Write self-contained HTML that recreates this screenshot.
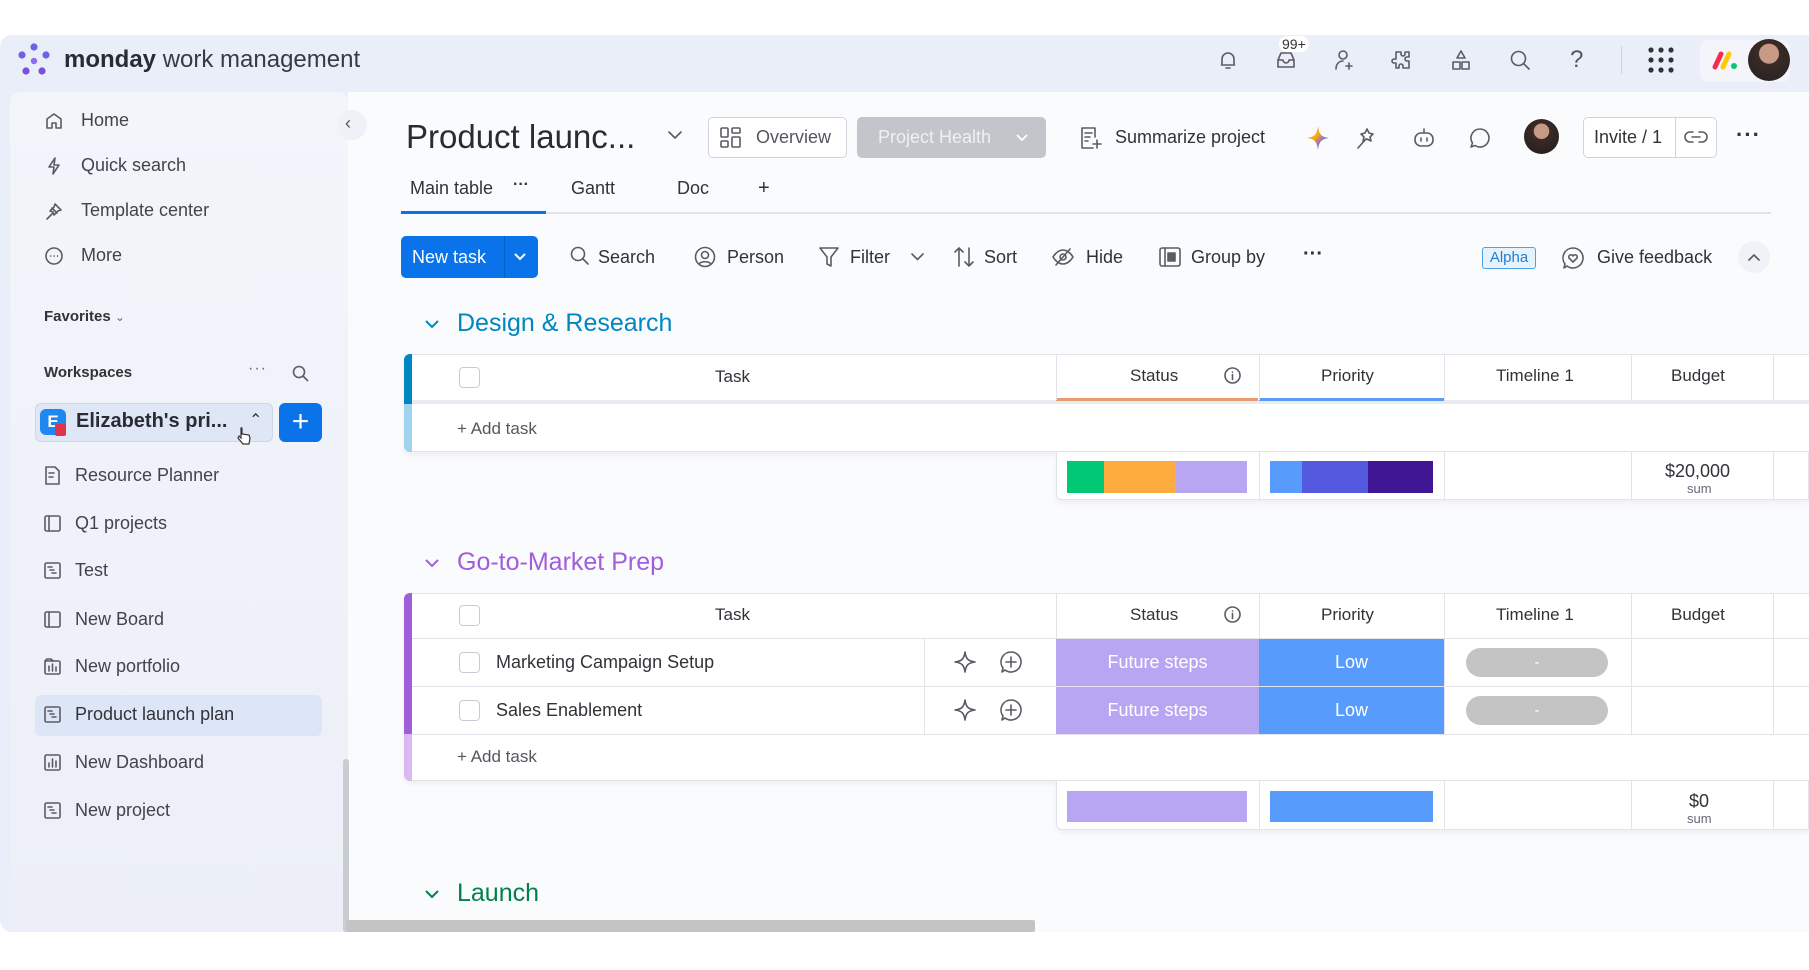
<!DOCTYPE html>
<html><head><meta charset="utf-8">
<style>
*{box-sizing:border-box;margin:0;padding:0}
body{width:1809px;height:970px;background:#fff;font-family:"Liberation Sans",sans-serif;color:#323338;position:relative;overflow:hidden}
.a{position:absolute}
.app{left:0;top:35px;width:1809px;height:897px;background:#e9eef9;border-radius:12px 0 0 12px;overflow:hidden}
.side{left:10px;top:92px;width:338px;height:840px;background:linear-gradient(#f3f5fb,#eceff7);border-radius:10px 10px 0 0}
.main{left:348px;top:92px;width:1461px;height:840px;background:#fafbfd}
.t{position:absolute;white-space:nowrap}
.si{font-size:18px;color:#42444b}
.ic{position:absolute}
svg{position:absolute;overflow:visible}
.gi{fill:none;stroke:#5a5c63;stroke-width:1.6;stroke-linecap:round;stroke-linejoin:round}
.tb{font-size:18px;color:#323338}
.hdr{font-size:17px;color:#323338}
.cell{position:absolute;border-left:1px solid #e2e4ea}
</style></head><body>
<div class="a app"></div>
<!-- top bar logo -->
<svg style="left:16px;top:42px" width="36" height="36" viewBox="0 0 36 36">
<g fill="#6c63e8"><circle cx="18" cy="5" r="3.6"/><circle cx="6" cy="13" r="3.6"/><circle cx="30" cy="13" r="3.6"/><circle cx="18" cy="19" r="3.2" fill="#8a6df0"/><circle cx="10" cy="29" r="3.6" fill="#7b4ee0"/><circle cx="26" cy="29" r="3.6" fill="#7b4ee0"/></g></svg>
<div class="t" style="left:64px;top:46px;font-size:24px;"><b style="color:#2b2c33">monday</b> <span style="color:#3a3b40">work management</span></div>
<!-- top icons -->
<svg style="left:1216px;top:48px" width="24" height="24" viewBox="0 0 24 24" class="gi"><path d="M6 17V11a6 6 0 0 1 12 0v6H5.5h13M10 20h4"/></svg>
<svg style="left:1274px;top:48px" width="24" height="24" viewBox="0 0 24 24" class="gi"><path d="M4 12v7h16v-7M4 12l3-7h10l3 7h-5a3 3 0 0 1-6 0z"/></svg>
<div class="t" style="left:1279px;top:36px;font-size:14px;background:#fff;border-radius:9px;padding:0 3px;color:#323338">99+</div>
<svg style="left:1332px;top:48px" width="24" height="24" viewBox="0 0 24 24" class="gi"><circle cx="11" cy="7" r="4"/><path d="M4 21c0-5 3-8 7-8M17 15v6M14 18h6"/></svg>
<svg style="left:1390px;top:48px" width="24" height="24" viewBox="0 0 24 24" class="gi"><path d="M6 4h5v2a2 2 0 0 0 4 0V4h4v5h-2a2 2 0 0 0 0 4h2v7h-6v-2a2 2 0 0 0-4 0v2H6v-5H4a2 2 0 0 1 0-4h2z"/></svg>
<svg style="left:1449px;top:48px" width="24" height="24" viewBox="0 0 24 24" class="gi"><path d="M12 3l4 7H8zM4 14h7v7H4zM13 14h7v7h-7z"/></svg>
<svg style="left:1508px;top:48px" width="24" height="24" viewBox="0 0 24 24" class="gi"><circle cx="10.5" cy="10.5" r="7"/><path d="M16 16l5 5"/></svg>
<div class="t" style="left:1570px;top:46px;font-size:24px;color:#55575e">?</div>
<div class="a" style="left:1621px;top:46px;width:1px;height:28px;background:#d0d4de"></div>
<svg style="left:1648px;top:47px" width="26" height="26" viewBox="0 0 26 26"><g fill="#323338"><circle cx="3" cy="3" r="2.6"/><circle cx="13" cy="3" r="2.6"/><circle cx="23" cy="3" r="2.6"/><circle cx="3" cy="13" r="2.6"/><circle cx="13" cy="13" r="2.6"/><circle cx="23" cy="13" r="2.6"/><circle cx="3" cy="23" r="2.6"/><circle cx="13" cy="23" r="2.6"/><circle cx="23" cy="23" r="2.6"/></g></svg>
<div class="a" style="left:1700px;top:40px;width:90px;height:42px;background:#f3f5fa;border-radius:8px"></div>
<svg style="left:1712px;top:50px" width="26" height="20" viewBox="0 0 26 20"><path d="M3 17L9 4" stroke="#f62b54" stroke-width="5" stroke-linecap="round"/><path d="M11 17L17 4" stroke="#ffcb00" stroke-width="5" stroke-linecap="round"/><circle cx="22" cy="16" r="3" fill="#00ca72"/></svg>
<div class="a" style="left:1748px;top:39px;width:42px;height:42px;border-radius:50%;background:radial-gradient(circle at 50% 35%,#c79a86 0 28%,#3a2a25 30%,#222 100%)"></div>

<div class="a side"></div>
<div class="a main"></div>
<!-- sidebar -->
<svg style="left:45px;top:112px" width="18" height="18" viewBox="0 0 18 18" class="gi"><path d="M2 16V7l7-5 7 5v9h-5v-5H7v5z"/></svg>
<div class="t si" style="left:81px;top:110px">Home</div>
<svg style="left:45px;top:157px" width="18" height="18" viewBox="0 0 18 18" class="gi"><path d="M10 1L4 10h5l-1 7 6-9H9z"/></svg>
<div class="t si" style="left:81px;top:155px">Quick search</div>
<svg style="left:45px;top:202px" width="18" height="18" viewBox="0 0 18 18" class="gi"><path d="M2 17l6-6M7 6l5 5M10 2l6 6-3 1-4 4-1-3-3-1 4-4z"/></svg>
<div class="t si" style="left:81px;top:200px">Template center</div>
<svg style="left:45px;top:247px" width="18" height="18" viewBox="0 0 18 18" class="gi"><circle cx="9" cy="9" r="8"/><path d="M5.5 9h.1M9 9h.1M12.5 9h.1"/></svg>
<div class="t si" style="left:81px;top:245px">More</div>
<div class="t" style="left:44px;top:308px;font-size:15px;font-weight:bold;color:#323338">Favorites <span style="font-weight:normal;font-size:12px;color:#676879">&#8964;</span></div>
<div class="t" style="left:44px;top:364px;font-size:15px;font-weight:bold;color:#323338">Workspaces</div>
<div class="t" style="left:248px;top:360px;font-size:16px;color:#676879;letter-spacing:1px">···</div>
<svg style="left:292px;top:365px" width="17" height="17" viewBox="0 0 17 17" class="gi"><circle cx="7" cy="7" r="5.5"/><path d="M11 11l4.5 4.5"/></svg>
<div class="a" style="left:35px;top:403px;width:238px;height:39px;background:#dfe7f6;border:1px solid #cfd6e4;border-radius:6px"></div>
<div class="a" style="left:40px;top:409px;width:26px;height:26px;background:#1e88f0;border-radius:6px;color:#fff;font-size:17px;font-weight:bold;text-align:center;line-height:26px">E</div>
<div class="a" style="left:55px;top:424px;width:11px;height:12px;background:#e2334e;border-radius:2px"></div>
<div class="t" style="left:76px;top:410px;font-size:20px;font-weight:bold;color:#2b2c33">Elizabeth's pri...</div>
<div class="t" style="left:249px;top:410px;font-size:16px;color:#323338">&#8963;</div>
<div class="a" style="left:279px;top:403px;width:43px;height:39px;background:#0a73ea;border-radius:6px;color:#fff;font-size:30px;text-align:center;line-height:37px">+</div>
<svg style="left:236px;top:426px" width="16" height="20" viewBox="0 0 16 20"><path d="M5 2v10l-2-2-1 2 5 6h6l1-6-1-3-7-1V2z" fill="#fff" stroke="#333" stroke-width="1.2"/></svg>
<div class="a" style="left:35px;top:695px;width:287px;height:41px;background:#dce6f7;border-radius:6px"></div>
<!-- board list -->
<svg style="left:44px;top:466px" width="17" height="19" viewBox="0 0 17 19" class="gi"><path d="M2 1h9l4 4v13H2zM5 7h5M5 11h4"/></svg>
<div class="t si" style="left:75px;top:465px">Resource Planner</div>
<svg style="left:44px;top:515px" width="17" height="17" viewBox="0 0 17 17" class="gi"><rect x="1" y="1" width="15" height="15" rx="1.5"/><path d="M5 1v15"/></svg>
<div class="t si" style="left:75px;top:513px">Q1 projects</div>
<svg style="left:44px;top:562px" width="17" height="17" viewBox="0 0 17 17" class="gi"><rect x="1" y="1" width="15" height="15" rx="1.5"/><path d="M4 5h4M6 8h4M8 11h4"/></svg>
<div class="t si" style="left:75px;top:560px">Test</div>
<svg style="left:44px;top:611px" width="17" height="17" viewBox="0 0 17 17" class="gi"><rect x="1" y="1" width="15" height="15" rx="1.5"/><path d="M5 1v15"/></svg>
<div class="t si" style="left:75px;top:609px">New Board</div>
<svg style="left:44px;top:658px" width="17" height="17" viewBox="0 0 17 17" class="gi"><rect x="1" y="3" width="15" height="13" rx="1.5"/><path d="M1 3l2-2h4l2 2M5 13V8M8.5 13V6M12 13V9"/></svg>
<div class="t si" style="left:75px;top:656px">New portfolio</div>
<svg style="left:44px;top:706px" width="17" height="17" viewBox="0 0 17 17" class="gi"><rect x="1" y="1" width="15" height="15" rx="1.5"/><path d="M4 5h4M6 8h4M8 11h4"/></svg>
<div class="t si" style="left:75px;top:704px;color:#323338">Product launch plan</div>
<svg style="left:44px;top:754px" width="17" height="17" viewBox="0 0 17 17" class="gi"><rect x="1" y="1" width="15" height="15" rx="1.5"/><path d="M5 13V9M8.5 13V5M12 13V7"/></svg>
<div class="t si" style="left:75px;top:752px">New Dashboard</div>
<svg style="left:44px;top:802px" width="17" height="17" viewBox="0 0 17 17" class="gi"><rect x="1" y="1" width="15" height="15" rx="1.5"/><path d="M4 5h4M6 8h4M8 11h4"/></svg>
<div class="t si" style="left:75px;top:800px">New project</div>
<div class="a" style="left:343px;top:759px;width:6px;height:173px;background:#c9ccd3;border-radius:3px"></div>
<div class="a" style="left:337px;top:110px;width:30px;height:30px;border-radius:50%;background:#eef1f8"></div>
<div class="t" style="left:345px;top:113px;font-size:18px;color:#555">&#8249;</div>

<!-- header -->
<div class="t" style="left:406px;top:118px;font-size:33px;color:#2b2c33">Product launc...</div>
<svg style="left:667px;top:130px" width="16" height="10" viewBox="0 0 16 10" class="gi"><path d="M2 2l6 6 6-6"/></svg>
<div class="a" style="left:708px;top:117px;width:139px;height:41px;border:1px solid #d0d4dc;border-radius:5px;background:#fff"></div>
<svg style="left:720px;top:127px" width="22" height="22" viewBox="0 0 22 22" class="gi"><rect x="1" y="1" width="7" height="9" rx="1"/><rect x="12" y="1" width="8" height="5" rx="1"/><rect x="1" y="14" width="7" height="6" rx="1"/><rect x="12" y="10" width="8" height="10" rx="1"/></svg>
<div class="t" style="left:756px;top:127px;font-size:18px;color:#55575e">Overview</div>
<div class="a" style="left:857px;top:117px;width:189px;height:41px;background:#c3c5ca;border-radius:5px"></div>
<div class="t" style="left:878px;top:127px;font-size:18px;color:#eef0f3">Project Health</div>
<svg style="left:1015px;top:133px" width="14" height="9" viewBox="0 0 14 9"><path d="M2 2l5 5 5-5" fill="none" stroke="#fff" stroke-width="1.8"/></svg>
<svg style="left:1080px;top:126px" width="22" height="24" viewBox="0 0 22 24" class="gi"><path d="M13 22H2V2h13v9M5 7h7M5 11h5M5 15h3M17 14v8M13 18h8"/></svg>
<div class="t" style="left:1115px;top:127px;font-size:18px;color:#323338">Summarize project</div>
<svg style="left:1306px;top:125px" width="24" height="26" viewBox="0 0 24 26"><defs><linearGradient id="g" x1="0" y1="0" x2="1" y2="1"><stop offset="0" stop-color="#ff4d6d"/><stop offset=".4" stop-color="#ffb000"/><stop offset=".7" stop-color="#7b5cff"/><stop offset="1" stop-color="#0aa5ff"/></linearGradient></defs><path d="M12 1C13 9 15 12 23 13 15 14 13 17 12 25 11 17 9 14 1 13 9 12 11 9 12 1z" fill="url(#g)"/></svg>
<svg style="left:1356px;top:126px" width="22" height="24" viewBox="0 0 22 24" class="gi"><path d="M2 22l8-9M11 3l2 4 4 1-3 3 1 4-4-2-4 2 1-4-3-3 4-1z"/></svg>
<svg style="left:1412px;top:127px" width="24" height="22" viewBox="0 0 24 22" class="gi"><rect x="3" y="6" width="18" height="13" rx="6"/><path d="M12 2v4M9 11v3M15 11v3"/></svg>
<svg style="left:1469px;top:127px" width="22" height="22" viewBox="0 0 22 22" class="gi"><path d="M11 2a9 9 0 1 1-5 16.5L2 20l1.5-4A9 9 0 0 1 11 2z"/></svg>
<div class="a" style="left:1524px;top:119px;width:35px;height:35px;border-radius:50%;background:radial-gradient(circle at 50% 35%,#c79a86 0 26%,#3a2a25 28%,#1e1e1e 100%)"></div>
<div class="a" style="left:1583px;top:117px;width:134px;height:41px;border:1px solid #d0d4dc;border-radius:5px;background:#fff"></div>
<div class="a" style="left:1675px;top:117px;width:1px;height:41px;background:#d0d4dc"></div>
<div class="t" style="left:1594px;top:127px;font-size:18px;color:#323338">Invite / 1</div>
<svg style="left:1685px;top:129px" width="22" height="16" viewBox="0 0 22 16" class="gi"><path d="M8 3H5a5 5 0 0 0 0 10h3M14 3h3a5 5 0 0 1 0 10h-3M7 8h8"/></svg>
<div class="t" style="left:1736px;top:122px;font-size:22px;font-weight:bold;color:#323338;letter-spacing:1px">···</div>
<!-- tabs -->
<div class="a" style="left:401px;top:212px;width:1370px;height:2px;background:#e1e3ea"></div>
<div class="a" style="left:401px;top:211px;width:145px;height:3px;background:#0a73ea"></div>
<div class="t" style="left:410px;top:178px;font-size:18px;color:#323338">Main table</div>
<div class="t" style="left:513px;top:176px;font-size:16px;color:#323338;font-weight:bold">···</div>
<div class="t" style="left:571px;top:178px;font-size:18px;color:#323338">Gantt</div>
<div class="t" style="left:677px;top:178px;font-size:18px;color:#323338">Doc</div>
<div class="t" style="left:758px;top:177px;font-size:20px;color:#323338">+</div>
<!-- toolbar -->
<div class="a" style="left:401px;top:236px;width:137px;height:42px;background:#0a73ea;border-radius:5px"></div>
<div class="a" style="left:504px;top:236px;width:1px;height:42px;background:#0060c9"></div>
<div class="t" style="left:412px;top:247px;font-size:18px;color:#fff">New task</div>
<svg style="left:513px;top:252px" width="14" height="9" viewBox="0 0 14 9"><path d="M2 2l5 5 5-5" fill="none" stroke="#fff" stroke-width="2"/></svg>
<svg style="left:570px;top:246px" width="20" height="20" viewBox="0 0 20 20" class="gi"><circle cx="8" cy="8" r="6.5"/><path d="M13 13l5 5"/></svg>
<div class="t tb" style="left:598px;top:247px">Search</div>
<svg style="left:694px;top:246px" width="22" height="22" viewBox="0 0 22 22" class="gi"><circle cx="11" cy="11" r="9.5"/><circle cx="11" cy="9" r="3.5"/><path d="M5 18c2-3 10-3 12 0"/></svg>
<div class="t tb" style="left:727px;top:247px">Person</div>
<svg style="left:818px;top:246px" width="22" height="22" viewBox="0 0 22 22" class="gi"><path d="M2 2h18l-7 9v9l-4-2v-7z"/></svg>
<div class="t tb" style="left:850px;top:247px">Filter</div>
<svg style="left:911px;top:253px" width="13" height="8" viewBox="0 0 13 8" class="gi"><path d="M1 1l5.5 5.5L12 1"/></svg>
<svg style="left:953px;top:246px" width="22" height="22" viewBox="0 0 22 22" class="gi"><path d="M6 20V2M2 6l4-4 4 4M16 2v18M12 16l4 4 4-4"/></svg>
<div class="t tb" style="left:984px;top:247px">Sort</div>
<svg style="left:1052px;top:248px" width="22" height="18" viewBox="0 0 22 18" class="gi"><path d="M1 9s4-7 10-7 10 7 10 7-4 7-10 7S1 9 1 9z"/><circle cx="11" cy="9" r="3"/><path d="M4 17L18 1"/></svg>
<div class="t tb" style="left:1086px;top:247px">Hide</div>
<svg style="left:1159px;top:246px" width="22" height="22" viewBox="0 0 22 22" class="gi"><rect x="1" y="2" width="20" height="18" rx="2"/><path d="M6 2v18"/><rect x="9" y="7" width="7" height="8" fill="#5a5c63"/></svg>
<div class="t tb" style="left:1191px;top:247px">Group by</div>
<div class="t" style="left:1303px;top:243px;font-size:20px;color:#323338;font-weight:bold">···</div>
<div class="a" style="left:1482px;top:247px;width:54px;height:22px;border:1.5px solid #4aa3e8;border-radius:3px;background:#e6f2fc;color:#1f7fd1;font-size:15px;text-align:center;line-height:19px">Alpha</div>
<svg style="left:1561px;top:246px" width="24" height="24" viewBox="0 0 24 24" class="gi"><path d="M12 2a10 10 0 1 1-6 18l-3 2 1-4A10 10 0 0 1 12 2z"/><path d="M12 16l-4-4a2.2 2.2 0 0 1 4-2 2.2 2.2 0 0 1 4 2z"/></svg>
<div class="t tb" style="left:1597px;top:247px">Give feedback</div>
<div class="a" style="left:1738px;top:241px;width:32px;height:32px;border-radius:50%;background:#f0f2f7"></div>
<svg style="left:1748px;top:253px" width="12" height="8" viewBox="0 0 12 8" class="gi"><path d="M1 7l5-5 5 5"/></svg>

<!-- Group 1 -->
<svg style="left:424px;top:319px" width="16" height="10" viewBox="0 0 16 10"><path d="M2 2l6 6 6-6" fill="none" stroke="#0086c0" stroke-width="2"/></svg>
<div class="t" style="left:457px;top:309px;font-size:25px;color:#0086c0">Design &amp; Research</div>
<div class="a" style="left:404px;top:354px;width:1405px;height:98px;background:#fff;border-top:1px solid #e2e4ea;border-bottom:1px solid #e2e4ea;border-radius:6px 0 0 6px;box-shadow:0 3px 6px rgba(0,0,0,.05)"></div>
<div class="a" style="left:404px;top:354px;width:8px;height:50px;background:#0086c0;border-radius:6px 0 0 0"></div>
<div class="a" style="left:404px;top:404px;width:8px;height:48px;background:#a0d3ee;border-radius:0 0 0 6px"></div>
<div class="a" style="left:412px;top:400px;width:1397px;height:4px;background:#e8ebf2"></div>
<div class="a" style="left:1056px;top:398px;width:202px;height:3px;background:#e99a6f"></div>
<div class="a" style="left:1259px;top:398px;width:185px;height:3px;background:#5b9cf5"></div>
<div class="a" style="left:459px;top:367px;width:21px;height:21px;border:1.5px solid #c9ccd4;border-radius:4px"></div>
<div class="t hdr" style="left:715px;top:367px">Task</div>
<div class="cell" style="left:1056px;top:354px;height:46px"></div>
<div class="cell" style="left:1259px;top:354px;height:46px"></div>
<div class="cell" style="left:1444px;top:354px;height:46px"></div>
<div class="cell" style="left:1631px;top:354px;height:46px"></div>
<div class="cell" style="left:1773px;top:354px;height:46px"></div>
<div class="t hdr" style="left:1130px;top:366px">Status</div>
<svg style="left:1224px;top:367px" width="17" height="17" viewBox="0 0 17 17" class="gi"><circle cx="8.5" cy="8.5" r="7.5"/><path d="M8.5 7.5v5M8.5 5v.1"/></svg>
<div class="t hdr" style="left:1321px;top:366px">Priority</div>
<div class="t hdr" style="left:1496px;top:366px">Timeline 1</div>
<div class="t hdr" style="left:1671px;top:366px">Budget</div>
<div class="t" style="left:457px;top:419px;font-size:17px;color:#55575e">+ Add task</div>
<!-- summary 1 -->
<div class="a" style="left:1056px;top:452px;width:753px;height:48px;background:#fff;border:1px solid #e2e4ea;border-top:none;border-radius:0 0 0 6px;box-shadow:0 3px 6px rgba(0,0,0,.05)"></div>
<div class="cell" style="left:1259px;top:452px;height:48px"></div>
<div class="cell" style="left:1444px;top:452px;height:48px"></div>
<div class="cell" style="left:1631px;top:452px;height:48px"></div>
<div class="cell" style="left:1773px;top:452px;height:48px"></div>
<div class="a" style="left:1067px;top:461px;width:37px;height:32px;background:#00c875"></div>
<div class="a" style="left:1104px;top:461px;width:72px;height:32px;background:#fdab3d"></div>
<div class="a" style="left:1176px;top:461px;width:71px;height:32px;background:#b9a6f3"></div>
<div class="a" style="left:1270px;top:461px;width:32px;height:32px;background:#579bfc"></div>
<div class="a" style="left:1302px;top:461px;width:66px;height:32px;background:#5559df"></div>
<div class="a" style="left:1368px;top:461px;width:65px;height:32px;background:#401694"></div>
<div class="t" style="left:1665px;top:461px;font-size:18px;color:#323338">$20,000</div>
<div class="t" style="left:1687px;top:481px;font-size:13px;color:#676879">sum</div>

<!-- Group 2 -->
<svg style="left:424px;top:558px" width="16" height="10" viewBox="0 0 16 10"><path d="M2 2l6 6 6-6" fill="none" stroke="#a25ddc" stroke-width="2"/></svg>
<div class="t" style="left:457px;top:548px;font-size:25px;color:#a25ddc">Go-to-Market Prep</div>
<div class="a" style="left:404px;top:593px;width:1405px;height:188px;background:#fff;border-top:1px solid #e2e4ea;border-bottom:1px solid #e2e4ea;border-radius:6px 0 0 6px;box-shadow:0 3px 6px rgba(0,0,0,.05)"></div>
<div class="a" style="left:404px;top:593px;width:8px;height:141px;background:#a25ddc;border-radius:6px 0 0 0"></div>
<div class="a" style="left:404px;top:734px;width:8px;height:47px;background:#dab8f2;border-radius:0 0 0 6px"></div>
<div class="a" style="left:412px;top:638px;width:1397px;height:1px;background:#e2e4ea"></div>
<div class="a" style="left:412px;top:686px;width:1397px;height:1px;background:#e2e4ea"></div>
<div class="a" style="left:412px;top:734px;width:1397px;height:1px;background:#e2e4ea"></div>
<div class="cell" style="left:1056px;top:593px;height:141px"></div>
<div class="cell" style="left:1259px;top:593px;height:141px"></div>
<div class="cell" style="left:1444px;top:593px;height:141px"></div>
<div class="cell" style="left:1631px;top:593px;height:141px"></div>
<div class="cell" style="left:1773px;top:593px;height:141px"></div>
<div class="cell" style="left:924px;top:638px;height:96px"></div>
<div class="a" style="left:459px;top:605px;width:21px;height:21px;border:1.5px solid #c9ccd4;border-radius:4px"></div>
<div class="t hdr" style="left:715px;top:605px">Task</div>
<div class="t hdr" style="left:1130px;top:605px">Status</div>
<svg style="left:1224px;top:606px" width="17" height="17" viewBox="0 0 17 17" class="gi"><circle cx="8.5" cy="8.5" r="7.5"/><path d="M8.5 7.5v5M8.5 5v.1"/></svg>
<div class="t hdr" style="left:1321px;top:605px">Priority</div>
<div class="t hdr" style="left:1496px;top:605px">Timeline 1</div>
<div class="t hdr" style="left:1671px;top:605px">Budget</div>
<!-- rows -->
<div class="a" style="left:459px;top:652px;width:21px;height:21px;border:1.5px solid #c9ccd4;border-radius:4px"></div>
<div class="t" style="left:496px;top:652px;font-size:18px;color:#323338">Marketing Campaign Setup</div>
<div class="a" style="left:459px;top:700px;width:21px;height:21px;border:1.5px solid #c9ccd4;border-radius:4px"></div>
<div class="t" style="left:496px;top:700px;font-size:18px;color:#323338">Sales Enablement</div>
<svg style="left:953px;top:650px" width="24" height="24" viewBox="0 0 24 24" class="gi"><path d="M12 2C13 9 15 11 22 12 15 13 13 15 12 22 11 15 9 13 2 12 9 11 11 9 12 2z"/></svg>
<svg style="left:999px;top:650px" width="24" height="24" viewBox="0 0 24 24" class="gi"><path d="M12 2a10 10 0 1 1-6 18l-3 2 1-4A10 10 0 0 1 12 2zM12 7v10M7 12h10"/></svg>
<svg style="left:953px;top:698px" width="24" height="24" viewBox="0 0 24 24" class="gi"><path d="M12 2C13 9 15 11 22 12 15 13 13 15 12 22 11 15 9 13 2 12 9 11 11 9 12 2z"/></svg>
<svg style="left:999px;top:698px" width="24" height="24" viewBox="0 0 24 24" class="gi"><path d="M12 2a10 10 0 1 1-6 18l-3 2 1-4A10 10 0 0 1 12 2zM12 7v10M7 12h10"/></svg>
<div class="a" style="left:1056px;top:639px;width:203px;height:47px;background:#b9a6f3;color:#fff;font-size:18px;text-align:center;line-height:47px">Future steps</div>
<div class="a" style="left:1056px;top:687px;width:203px;height:47px;background:#b9a6f3;color:#fff;font-size:18px;text-align:center;line-height:47px">Future steps</div>
<div class="a" style="left:1259px;top:639px;width:185px;height:47px;background:#579bfc;color:#fff;font-size:18px;text-align:center;line-height:47px">Low</div>
<div class="a" style="left:1259px;top:687px;width:185px;height:47px;background:#579bfc;color:#fff;font-size:18px;text-align:center;line-height:47px">Low</div>
<div class="a" style="left:1466px;top:648px;width:142px;height:29px;background:#c4c4c4;border-radius:15px;color:#fff;text-align:center;line-height:29px;font-size:15px">-</div>
<div class="a" style="left:1466px;top:696px;width:142px;height:29px;background:#c4c4c4;border-radius:15px;color:#fff;text-align:center;line-height:29px;font-size:15px">-</div>
<div class="t" style="left:457px;top:747px;font-size:17px;color:#55575e">+ Add task</div>
<!-- summary 2 -->
<div class="a" style="left:1056px;top:781px;width:753px;height:49px;background:#fff;border:1px solid #e2e4ea;border-top:none;border-radius:0 0 0 6px;box-shadow:0 3px 6px rgba(0,0,0,.05)"></div>
<div class="cell" style="left:1259px;top:781px;height:49px"></div>
<div class="cell" style="left:1444px;top:781px;height:49px"></div>
<div class="cell" style="left:1631px;top:781px;height:49px"></div>
<div class="cell" style="left:1773px;top:781px;height:49px"></div>
<div class="a" style="left:1067px;top:791px;width:180px;height:31px;background:#b9a6f3"></div>
<div class="a" style="left:1270px;top:791px;width:163px;height:31px;background:#579bfc"></div>
<div class="t" style="left:1689px;top:791px;font-size:18px;color:#323338">$0</div>
<div class="t" style="left:1687px;top:811px;font-size:13px;color:#676879">sum</div>

<!-- Launch -->
<svg style="left:424px;top:889px" width="16" height="10" viewBox="0 0 16 10"><path d="M2 2l6 6 6-6" fill="none" stroke="#037f4c" stroke-width="2"/></svg>
<div class="t" style="left:457px;top:879px;font-size:25px;color:#037f4c">Launch</div>
<div class="a" style="left:346px;top:920px;width:689px;height:12px;background:#c4c4c4;border-radius:2px"></div>
<div class="a" style="left:0;top:932px;width:1809px;height:38px;background:#fff"></div>
</body></html>
